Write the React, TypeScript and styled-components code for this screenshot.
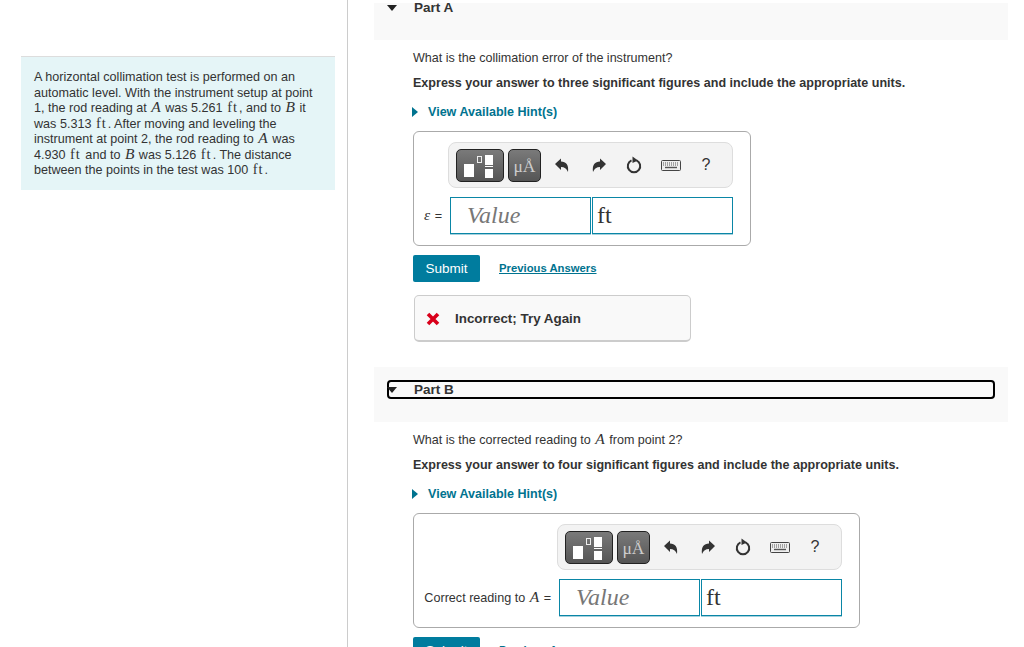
import React, {FunctionComponent} from 'react';
import styled, {createGlobalStyle} from 'styled-components';

const GlobalStyle = createGlobalStyle`
  html, body {
    margin: 0;
    height: 647px;
    overflow: hidden;
    background: #fff;
    font-family: "Liberation Sans", Arial, sans-serif;
    color: #333;
  }
`;

const Page = styled.div`
  display: flex;
  width: 1024px;
  height: 647px;
  overflow: hidden;
`;

const LeftColumn = styled.div`
  box-sizing: border-box;
  width: 348px;
  height: 647px;
  flex-shrink: 0;
  padding: 56px 12px 0 21px;
  border-right: 1px solid #ccc;
`;

const Intro = styled.div`
  box-sizing: border-box;
  height: 134px;
  padding: 13px 13px 0;
  background: #e5f5f7;
  border-top: 1px solid #ddd;
  font-size: 12.6px;
  line-height: 15.5px;
  white-space: nowrap;
`;

const MathVar = styled.i`
  padding: 0 1px;
  font-family: "Liberation Serif", serif;
  font-size: 15.5px;
  line-height: 0;
`;

const Unit = styled.span`
  padding: 0 1px;
  font-family: "Liberation Serif", serif;
  font-size: 14.5px;
  letter-spacing: 1px;
  line-height: 0;
`;

const RightColumn = styled.div`
  width: 634px;
  margin-left: 26px;
  padding-top: 3px;
`;

const Section = styled.section`
  margin-bottom: 25px;
`;

const PartHeader = styled.div<{$cut?: boolean}>`
  box-sizing: border-box;
  display: flow-root;
  height: ${({$cut}) => ($cut ? '37px' : '55px')};
  padding: ${({$cut}) => ($cut ? '0 13px' : '13px 13px 0')};
  background: #f9f9f9;
`;

const PartTitle = styled.div<{$focused?: boolean}>`
  box-sizing: border-box;
  display: flex;
  align-items: center;
  width: 608px;
  height: 19px;
  margin-top: ${({$focused}) => ($focused ? '0' : '-5px')};
  border: 2px solid ${({$focused}) => ($focused ? '#000' : 'transparent')};
  border-radius: 4px;
  font-size: 13.5px;
  font-weight: 700;
  color: #333;
`;

const Caret = styled.span`
  width: 0;
  height: 0;
  margin: 0 17px 0 -2px;
  border-left: 5.5px solid transparent;
  border-right: 5.5px solid transparent;
  border-top: 6px solid #222;
`;

const Body = styled.div`
  padding: 11px 0 0 39px;
`;

const Question = styled.p`
  height: 15px;
  margin: 0;
  font-size: 12.55px;
  line-height: 15px;
  white-space: pre;
`;

const Instruction = styled.p`
  height: 15px;
  margin: 10px 0 0;
  font-size: 12.55px;
  font-weight: 700;
  line-height: 15px;
`;

const Hint = styled.div`
  display: flex;
  align-items: center;
  gap: 10px;
  height: 15px;
  margin: 13px 0 0 -1px;
  font-size: 12.55px;
  font-weight: 700;
  color: #00738f;
`;

const HintArrow = styled.span`
  width: 0;
  height: 0;
  border-top: 5px solid transparent;
  border-bottom: 5px solid transparent;
  border-left: 6px solid #00738f;
`;

const AnswerBox = styled.div<{$width: number}>`
  box-sizing: border-box;
  display: flex;
  flex-direction: column;
  align-items: flex-end;
  gap: 9px;
  width: ${({$width}) => $width}px;
  height: 115px;
  margin-top: 12px;
  padding: 10px 17px 0 10px;
  border: 1px solid #aaa;
  border-radius: 6px;
`;

const Toolbar = styled.div`
  box-sizing: border-box;
  display: flex;
  align-items: center;
  width: 285px;
  height: 46px;
  padding-left: 7px;
  background: #f3f3f3;
  border: 1px solid #ddd;
  border-radius: 8px;
`;

const ToolButton = styled.div<{$width: number}>`
  box-sizing: border-box;
  display: flex;
  align-items: center;
  justify-content: center;
  width: ${({$width}) => $width}px;
  height: 33px;
  margin-right: 4px;
  padding-top: 2px;
  background: linear-gradient(#7a7a7a, #555);
  border: 1px solid #222;
  border-radius: 5px;
  color: #ccc;
  font-family: "Liberation Serif", serif;
  font-size: 17.5px;
`;

const IconSlot = styled.div<{$width: number}>`
  display: flex;
  align-items: center;
  justify-content: center;
  width: ${({$width}) => $width}px;
  height: 33px;
  color: #333;
  font-size: 16px;
`;

const InputRow = styled.div`
  display: flex;
  align-items: center;
  align-self: stretch;
  justify-content: flex-end;
`;

const InputLabel = styled.span`
  margin-right: 8px;
  font-size: 12.6px;
  white-space: pre;
`;

const Field = styled.div<{$placeholder?: boolean}>`
  box-sizing: border-box;
  flex-shrink: 0;
  width: 141px;
  height: 37px;
  padding-left: ${({$placeholder}) => ($placeholder ? '16px' : '4px')};
  border: 1px solid #0a86a6;
  box-shadow: 0 1px 0 rgba(0, 124, 158, 0.35);
  font-family: "Liberation Serif", serif;
  font-size: 24px;
  font-style: ${({$placeholder}) => ($placeholder ? 'italic' : 'normal')};
  line-height: 35px;
  color: ${({$placeholder}) => ($placeholder ? '#777' : '#333')};

  & + & {
    margin-left: 1px;
  }
`;

const Actions = styled.div`
  display: flex;
  align-items: center;
  gap: 19px;
  margin-top: 9px;
`;

const SubmitButton = styled.button`
  width: 67px;
  height: 27px;
  padding: 0;
  background: #007c9e;
  border: 0;
  border-radius: 2px;
  color: #fff;
  font-family: inherit;
  font-size: 13.5px;
`;

const PreviousAnswers = styled.a`
  margin-bottom: 1px;
  font-size: 11.3px;
  font-weight: 700;
  color: #00738f;
  text-decoration: underline;
`;

const Feedback = styled.div`
  box-sizing: border-box;
  display: flex;
  align-items: center;
  gap: 15px;
  width: 277px;
  height: 47px;
  margin-top: 13px;
  margin-left: 1px;
  padding: 1px 0 0 11px;
  background: #f9f9f9;
  border: 1px solid #ccc;
  border-bottom: 2px solid #ccc;
  border-radius: 5px;
  font-size: 13.4px;
  font-weight: 700;
`;

const TemplateIcon = () => (
  <svg width="29" height="23" viewBox="0 0 29 23" style={{marginLeft: -3}}>
    <rect x="0" y="9" width="10" height="13" fill="#fff" />
    <rect x="13.5" y="1.5" width="4" height="6" fill="none" stroke="#eee" strokeWidth="1" />
    <rect x="21" y="0" width="8" height="10" fill="#fff" />
    <rect x="21" y="11" width="8" height="1" fill="#fff" />
    <rect x="21" y="14" width="8" height="9" fill="#fff" />
  </svg>
);

const UndoIcon = ({flip}: {flip?: boolean}) => (
  <svg width="14" height="15" viewBox="0 0 14 15" style={flip ? {transform: 'scaleX(-1)'} : undefined}>
    <path d="M0 6 6 .5v3.1c5 0 8 3.4 7 10.4-1.5-3.5-3.5-5-7-5v3z" fill="#333" />
  </svg>
);

const RefreshIcon = () => (
  <svg width="16" height="18" viewBox="0 0 16 18">
    <path d="M10.5 4.3a6.2 6.2 0 1 1-5 0" fill="none" stroke="#333" strokeWidth="2" />
    <path d="M6.5 0.5 12 4.4 6.5 7z" fill="#333" />
  </svg>
);

const KeyboardIcon = () => (
  <svg width="20" height="11" viewBox="0 0 20 11">
    <rect x="0.5" y="0.5" width="19" height="10" rx="1" fill="#eee" stroke="#444" />
    <path d="M2 3h16M2 5h16" stroke="#555" strokeWidth="1" strokeDasharray="1 1" />
    <path d="M4 7.5h12" stroke="#555" strokeWidth="1.4" />
  </svg>
);

const CrossIcon = () => (
  <svg width="14" height="14" viewBox="0 0 14 14">
    <path d="M2 2l10 10M12 2 2 12" stroke="#d9001b" strokeWidth="3.6" />
  </svg>
);

const MathToolbar: FunctionComponent = () => (
  <Toolbar>
    <ToolButton $width={48}>
      <TemplateIcon />
    </ToolButton>
    <ToolButton $width={33}>μÅ</ToolButton>
    <IconSlot $width={33}>
      <UndoIcon />
    </IconSlot>
    <IconSlot $width={42}>
      <UndoIcon flip />
    </IconSlot>
    <IconSlot $width={27}>
      <RefreshIcon />
    </IconSlot>
    <IconSlot $width={47}>
      <KeyboardIcon />
    </IconSlot>
    <IconSlot $width={24}>?</IconSlot>
  </Toolbar>
);

const App: FunctionComponent = () => {
  return (
    <>
      <GlobalStyle />
      <Page>
        <LeftColumn>
          <Intro>
            A horizontal collimation test is performed on an
            <br />
            automatic level. With the instrument setup at point
            <br />
            1, the rod reading at <MathVar>A</MathVar> was 5.261 <Unit>ft</Unit>, and to <MathVar>B</MathVar> it
            <br />
            was 5.313 <Unit>ft</Unit>. After moving and leveling the
            <br />
            instrument at point 2, the rod reading to <MathVar>A</MathVar> was
            <br />
            4.930 <Unit>ft</Unit> and to <MathVar>B</MathVar> was 5.126 <Unit>ft</Unit>. The distance
            <br />
            between the points in the test was 100 <Unit>ft</Unit>.
          </Intro>
        </LeftColumn>
        <RightColumn>
          <Section>
            <PartHeader $cut>
              <PartTitle>
                <Caret />
                Part A
              </PartTitle>
            </PartHeader>
            <Body>
              <Question>What is the collimation error of the instrument?</Question>
              <Instruction>Express your answer to three significant figures and include the appropriate units.</Instruction>
              <Hint>
                <HintArrow />
                View Available Hint(s)
              </Hint>
              <AnswerBox $width={338}>
                <MathToolbar />
                <InputRow>
                  <InputLabel>
                    <MathVar>ε</MathVar> =
                  </InputLabel>
                  <Field $placeholder>Value</Field>
                  <Field>ft</Field>
                </InputRow>
              </AnswerBox>
              <Actions>
                <SubmitButton>Submit</SubmitButton>
                <PreviousAnswers>Previous Answers</PreviousAnswers>
              </Actions>
              <Feedback>
                <CrossIcon />
                Incorrect; Try Again
              </Feedback>
            </Body>
          </Section>
          <Section>
            <PartHeader>
              <PartTitle $focused>
                <Caret />
                Part B
              </PartTitle>
            </PartHeader>
            <Body>
              <Question>
                What is the corrected reading to <MathVar>A</MathVar> from point 2?
              </Question>
              <Instruction>Express your answer to four significant figures and include the appropriate units.</Instruction>
              <Hint>
                <HintArrow />
                View Available Hint(s)
              </Hint>
              <AnswerBox $width={447}>
                <MathToolbar />
                <InputRow>
                  <InputLabel>
                    Correct reading to <MathVar>A</MathVar> =
                  </InputLabel>
                  <Field $placeholder>Value</Field>
                  <Field>ft</Field>
                </InputRow>
              </AnswerBox>
              <Actions>
                <SubmitButton>Submit</SubmitButton>
                <PreviousAnswers>Previous Answers</PreviousAnswers>
              </Actions>
            </Body>
          </Section>
        </RightColumn>
      </Page>
    </>
  );
};

export default App;
